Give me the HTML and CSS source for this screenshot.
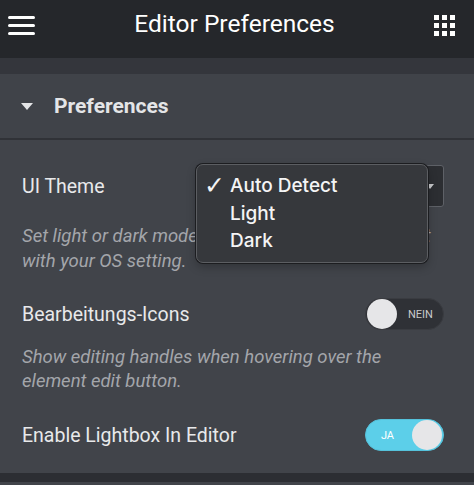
FILE: index.html
```html
<!DOCTYPE html>
<html lang="en">

<head>
  <meta charset="UTF-8" />
  <meta name="viewport" content="width=device-width, initial-scale=1.0" />
  <title>Editor Preferences</title>
  <link rel="stylesheet" href="styles.css">
</head>

<body>
  <header class="topbar">
    <div class="topbar-row">
      <div class="hamburger">
        <span></span>
        <span></span>
        <span></span>
      </div>
      <h1 class="topbar-title">Editor Preferences</h1>
      <div class="apps-grid">
        <span></span><span></span><span></span>
        <span></span><span></span><span></span>
        <span></span><span></span><span></span>
      </div>
    </div>
  </header>

  <div class="band"></div>

  <section class="panel">
    <div class="panel-title">
      <span class="caret"></span>
      <span>Preferences</span>
    </div>

    <div class="panel-body">
      <div class="control">
        <div class="control-row select-row">
          <label class="control-label">UI Theme</label>
          <div class="select-box">
            <span class="select-arrow"></span>
          </div>
        </div>
        <p class="control-desc">Set light or dark mode, or use Auto Detect to sync it with your OS setting.</p>

        <ul class="dropdown">
          <li class="selected"><span class="check">✓</span>Auto Detect</li>
          <li><span class="check"></span>Light</li>
          <li><span class="check"></span>Dark</li>
        </ul>
      </div>

      <div class="control">
        <div class="control-row">
          <label class="control-label">Bearbeitungs-Icons</label>
          <div class="switch">
            <span class="knob"></span>
            <span class="switch-text">NEIN</span>
          </div>
        </div>
        <p class="control-desc desc-tight">Show editing handles when hovering over the element edit button.</p>
      </div>

      <div class="control">
        <div class="control-row">
          <label class="control-label">Enable Lightbox In Editor</label>
          <div class="switch on">
            <span class="switch-text">JA</span>
            <span class="knob"></span>
          </div>
        </div>
      </div>
    </div>
  </section>

  <div class="footer-band"></div>
</body>

</html>
```

FILE: styles.css
```css
body {
  font-family: Roboto, "Liberation Sans", sans-serif;
  margin: 0;
  background-color: #41444a;
  color: #e8e9ea;
  width: 474px;
  height: 485px;
  overflow: hidden;
}

.topbar {
  background: #25272b;
  height: 58px;
}

.topbar-row {
  display: flex;
  align-items: center;
  height: 48px;
  padding: 1px 19px 0 8px;
}

.hamburger {
  width: 27px;
  display: flex;
  flex-direction: column;
  gap: 5px;
}

.hamburger span {
  display: block;
  height: 3px;
  background: #ffffff;
  border-radius: 2px;
}

.topbar-title {
  flex: 1;
  margin: 0;
  text-align: center;
  font-size: 24.5px;
  font-weight: 400;
  color: #ffffff;
  padding-bottom: 3px;
}

.apps-grid {
  display: grid;
  grid-template-columns: repeat(3, 5px);
  gap: 3px;
}

.apps-grid span {
  width: 5px;
  height: 5px;
  background: #ffffff;
}

.band {
  height: 16px;
  background: #34363c;
}

.panel-title {
  display: flex;
  align-items: center;
  gap: 21px;
  padding-left: 21px;
  background: #404349;
  border-bottom: 2px solid #303237;
  font-size: 21px;
  font-weight: 700;
  color: #e4e5e7;
  box-sizing: border-box;
  height: 66px;
}

.caret {
  width: 0;
  height: 0;
  border-left: 6px solid transparent;
  border-right: 6px solid transparent;
  border-top: 7px solid #e4e5e7;
}

.panel-body {
  padding: 25px 30px 22px 22px;
}

.control {
  position: relative;
  margin-bottom: 24px;
}

.control:last-child {
  margin-top: 26px;
  margin-bottom: 0;
}

.control-row {
  display: flex;
  align-items: center;
  justify-content: space-between;
  height: 32px;
}

.select-row {
  height: 42px;
}

.control-label {
  font-size: 19.5px;
  color: #e8e9ea;
}

.control-desc {
  margin: 17px 0 0;
  max-width: 418px;
  font-size: 18.5px;
  line-height: 25px;
  font-style: italic;
  color: #a4a6ab;
}

.desc-tight {
  margin-top: 15px;
  line-height: 24px;
}

.select-box {
  position: relative;
  width: 238px;
  height: 40px;
  background: #2c2e32;
  border: 1px solid #5e6167;
  border-radius: 3px;
}

.select-arrow {
  position: absolute;
  right: 9px;
  top: 18px;
  border-left: 4px solid transparent;
  border-right: 4px solid transparent;
  border-top: 5px solid #c8c9cc;
}

.dropdown {
  position: absolute;
  left: 174px;
  top: -1px;
  width: 230px;
  margin: 0;
  padding: 7px 0;
  list-style: none;
  background: #36383c;
  border: 1px solid #5c5e62;
  border-radius: 7px;
  box-shadow: 0 0 0 1px #1c1d20, 0 4px 10px rgba(0, 0, 0, 0.25);
  font-family: Inter, Roboto, sans-serif;
  font-size: 19px;
  font-weight: 500;
  color: #f4f4f5;
}

.dropdown li {
  display: flex;
  align-items: center;
  height: 27.5px;
}

.check {
  width: 26px;
  padding-left: 7px;
  font-family: "DejaVu Sans", sans-serif;
  font-size: 25px;
  line-height: 1;
  font-weight: 400;
}

.switch {
  display: flex;
  align-items: center;
  width: 79px;
  height: 32px;
  box-sizing: border-box;
  border-radius: 16px;
  background: #2f3136;
  border: 1px solid #3a3c41;
  padding: 0 1px;
}

.switch .knob {
  width: 30px;
  height: 30px;
  border-radius: 50%;
  background: #e6e6e8;
}

.switch-text {
  flex: 1;
  text-align: center;
  font-size: 11px;
  color: #c9cacd;
  padding-left: 2px;
}

.switch.on {
  background: #5ccfe9;
  border-color: #55c2db;
}

.switch.on .switch-text {
  color: #ffffff;
  padding-left: 0;
  padding-right: 4px;
}

.footer-band {
  height: 9px;
  background: #2c2e33;
}
```
